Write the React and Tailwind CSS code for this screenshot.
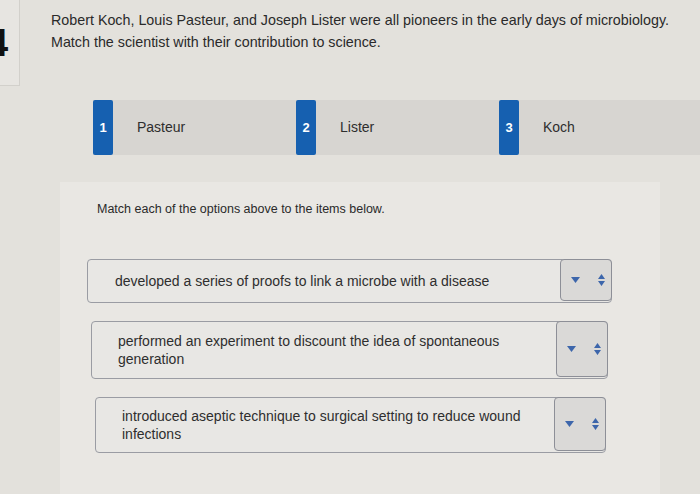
import React from 'react';

const choices = [
  { n: 1, name: 'Pasteur' },
  { n: 2, name: 'Lister' },
  { n: 3, name: 'Koch' },
];

const items = [
  { text: 'developed a series of proofs to link a microbe with a disease', box: 'ml-[27px] w-[525px] h-[44px]', pad: 'pl-[27px]' },
  { text: 'performed an experiment to discount the idea of spontaneous generation', box: 'ml-[31px] w-[517px] h-[58px]', pad: 'pl-[26px]' },
  { text: 'introduced aseptic technique to surgical setting to reduce wound infections', box: 'ml-[35px] w-[511px] h-[56px]', pad: 'pl-[26px]' },
];

function Arrows() {
  return (
    <div className="w-[52px] h-full shrink-0 border border-[#8d8f97] rounded-[4px] bg-[#dad9d7] flex items-center justify-between pl-[10px] pr-[6px] -mr-px -my-px">
      <svg width="9" height="6" viewBox="0 0 9 6"><path d="M0 0 L9 0 L4.5 6 Z" fill="#3d66ab" /></svg>
      <svg width="7" height="12" viewBox="0 0 7 12"><path d="M0 5 L7 5 L3.5 0 Z M0 7 L7 7 L3.5 12 Z" fill="#3d66ab" /></svg>
    </div>
  );
}

export default function App() {
  return (
    <div className="w-[700px] h-[494px] overflow-hidden bg-[#e3e1dc] flex text-[#2e2e2e]" style={{ fontFamily: '"Liberation Sans", Arial, sans-serif' }}>
      <div className="w-[20px] shrink-0 flex flex-col">
        <div className="h-[86px] border-r border-b border-[#d2d0cb] bg-[#e7e5e1] pt-[26px]">
          <div className="w-[9px] h-[34px] overflow-hidden">
            <span className="block -ml-[13px] text-[38px] leading-[34px] font-bold text-[#111]">4</span>
          </div>
        </div>
      </div>
      <div className="flex-1 flex flex-col">
        <div className="pl-[31px] pt-[9px] text-[14.3px] leading-[22px] text-[#2a2a2a]">
          <p>Robert Koch, Louis Pasteur, and Joseph Lister were all pioneers in the early days of microbiology.</p>
          <p>Match the scientist with their contribution to science.</p>
        </div>
        <div className="mt-[47px] ml-[73px] flex h-[55px] bg-[#d7d5d1]">
          {choices.map((c) => (
            <div key={c.n} className="w-[203px] flex items-center">
              <div className="w-[20px] h-full bg-[#1660b0] rounded-[2px] flex items-center justify-center text-white text-[13px] font-bold">{c.n}</div>
              <span className="ml-[24px] text-[14px] text-[#2e2e2e]">{c.name}</span>
            </div>
          ))}
          <div className="flex-1" />
        </div>
        <div className="mt-[27px] ml-[40px] w-[600px] flex-1 bg-[#e9e7e3] pt-[19px]">
          <p className="pl-[37px] text-[12.5px] leading-[16px] text-[#2a2a2a]">Match each of the options above to the items below.</p>
          <div className="mt-[42px] flex flex-col gap-[18px]">
            {items.map((it, i) => (
              <div key={i} className={`${it.box} flex border border-[#9a9ca3] rounded-[4px] bg-[#e8e7e4]`}>
                <div className={`flex-1 flex items-center ${it.pad} pr-[28px] text-[14px] leading-[18px] text-[#2e2e2e]`}>{it.text}</div>
                <Arrows />
              </div>
            ))}
          </div>
        </div>
      </div>
    </div>
  );
}
